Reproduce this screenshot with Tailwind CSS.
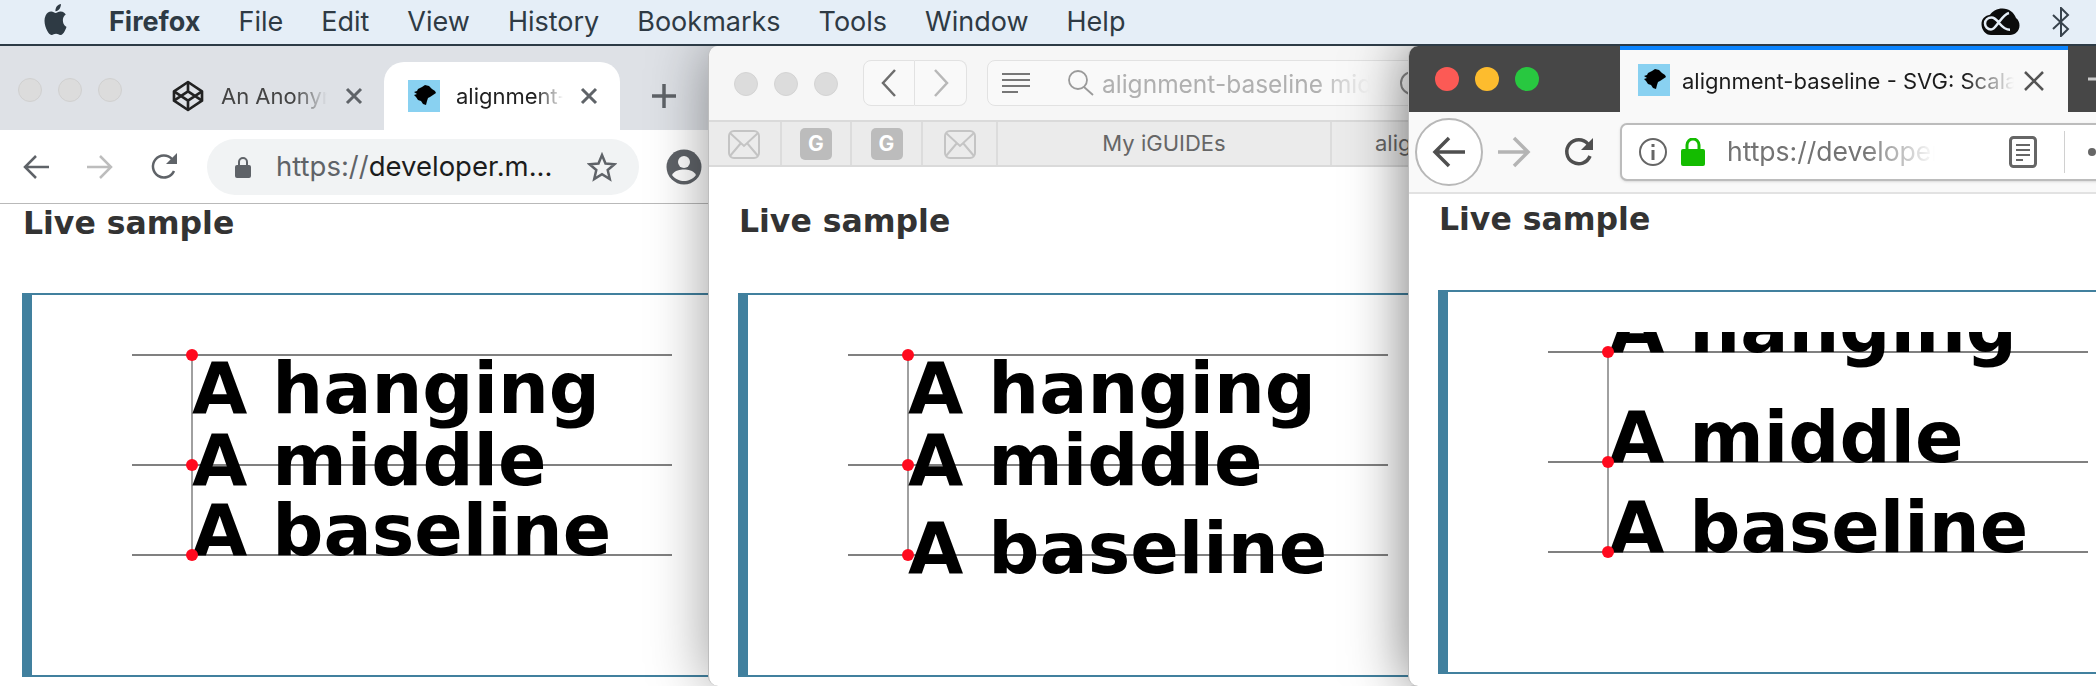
<!DOCTYPE html>
<html><head><meta charset="utf-8"><script src="https://cdn.jsdelivr.net/npm/@tailwindcss/browser@4"></script></head>
<body class="bg-white">
<div class="relative w-[2096px] h-[686px] overflow-hidden [font-family:'Inter',sans-serif]">

<!-- menu bar -->
<header class="absolute left-0 top-0 z-40 w-full h-[46px] border-b-2 border-[#2d3b46] bg-[#e5eef7] flex items-center text-[#2e3a44] text-[27px] pl-[42px]">
  <svg class="w-[27px] h-[31px] mr-[40px] -mt-[6px] shrink-0" viewBox="0 0 24 24" preserveAspectRatio="none" fill="#2e3a44"><path d="M12.152 6.896c-.948 0-2.415-1.078-3.96-1.04-2.04.027-3.91 1.183-4.961 3.014-2.117 3.675-.546 9.103 1.519 12.09 1.013 1.454 2.208 3.09 3.792 3.039 1.52-.065 2.09-.987 3.935-.987 1.831 0 2.35.987 3.96.948 1.637-.026 2.676-1.48 3.676-2.948 1.156-1.688 1.636-3.325 1.662-3.415-.039-.013-3.182-1.221-3.22-4.857-.026-3.04 2.48-4.494 2.597-4.559-1.429-2.09-3.623-2.324-4.39-2.376-2-.156-3.675 1.09-4.61 1.09zM15.53 3.83c.843-1.012 1.4-2.427 1.245-3.83-1.207.052-2.662.805-3.532 1.818-.78.896-1.454 2.338-1.273 3.714 1.338.104 2.715-.688 3.559-1.701"/></svg>
  <nav class="flex gap-[38px]">
    <span class="font-bold">Firefox</span><span>File</span><span>Edit</span><span>View</span><span>History</span><span>Bookmarks</span><span>Tools</span><span>Window</span><span>Help</span>
  </nav>
  <div class="ml-auto flex items-center gap-[32px] pr-[26px]">
    <svg class="w-[39px] h-[28px]" viewBox="0 0 39 28" fill="none"><path d="M10 27C4.500 27 0.500 22 0.500 16C0.500 11 4 7.500 9 6.800C11.500 3 16 0.500 21.500 0.500C28 0.500 33 4.500 35 10C37.500 12 38.500 14.500 38.500 17.500C38.500 23 34 27 29 27Z" fill="#0c0c0c"/><path d="M28 5C24 6 21 10 18 14C15 18 13 21.500 10 21.500C6.500 21.500 4 18.500 4 15.500C4 12 7 9.500 10.500 9.500C14 9.500 16 12.500 18.500 15.500C21 18.500 24 21.800 29 21.800" stroke="#e5eef7" stroke-width="2.500"/></svg>
    <svg class="w-[18px] h-[30px]" viewBox="0 0 18 30" fill="none" stroke="#37424c" stroke-width="2"><path d="M1 8L16 22L9 29V1L16 8L1 22"/></svg>
  </div>
</header>

<!-- window 1 : Chrome -->
<section class="absolute left-0 top-[46px] w-[720px] h-[640px] z-10 rounded-b-[10px] overflow-hidden bg-white flex flex-col">
  <div class="h-[84px] bg-[#dee1e6] flex items-end pl-[18px] shrink-0">
    <div class="flex gap-[16px] h-[43px] items-center self-start mt-[22px]">
      <span class="w-[24px] h-[24px] rounded-full bg-[#dcdcdc] border border-[#d0d0d0]"></span><span class="w-[24px] h-[24px] rounded-full bg-[#dcdcdc] border border-[#d0d0d0]"></span><span class="w-[24px] h-[24px] rounded-full bg-[#dcdcdc] border border-[#d0d0d0]"></span>
    </div>
    <div class="flex items-center h-[68px] w-[262px] pl-[50px] gap-[17px] shrink-0">
      <svg class="w-[32px] h-[32px] shrink-0" viewBox="0 0 24 24" fill="none" stroke="#222" stroke-width="2" stroke-linejoin="round"><path d="M12 1.500L22.500 8.500V15.500L12 22.500L1.500 15.500V8.500Z"/><path d="M12 22.500V15.500M22.500 8.500L12 15.500L1.500 8.500M1.500 15.500L12 8.500L22.500 15.500M12 1.500V8.500"/></svg>
      <span class="w-[106px] text-[22px] text-[#444] whitespace-nowrap overflow-hidden [mask-image:linear-gradient(to_right,black_70%,transparent)]">An Anonymous</span>
      <svg class="w-[18px] h-[18px] shrink-0 ml-[1px]" viewBox="0 0 18 18" stroke="#5f6368" stroke-width="3"><path d="M2 2L16 16M16 2L2 16"/></svg>
    </div>
    <div class="flex items-center h-[68px] w-[236px] bg-white rounded-t-[20px] pl-[24px] gap-[16px] shrink-0">
      <svg class="w-[32px] h-[32px] shrink-0" viewBox="0 0 32 32"><rect width="32" height="32" fill="#89d1f1"/><path d="M10 9L14 7L17 5L21 6L24 9L27 11L28 13L25 15L22 17L20 18L19 21L18 25L15 24L13 21L10 20L8 17L6 15L9 14L6 12L9 11Z" fill="#000"/></svg>
      <span class="w-[107px] text-[22px] text-[#222] whitespace-nowrap overflow-hidden [mask-image:linear-gradient(to_right,black_75%,transparent)]">alignment-baseline</span>
      <svg class="w-[18px] h-[18px] shrink-0 ml-[1px]" viewBox="0 0 18 18" stroke="#5f6368" stroke-width="3"><path d="M2 2L16 16M16 2L2 16"/></svg>
    </div>
    <svg class="w-[24px] h-[24px] ml-[32px] mb-[22px] shrink-0" viewBox="0 0 24 24" stroke="#5f6368" stroke-width="3.500"><path d="M12 0V24M0 12H24"/></svg>
  </div>
  <div class="h-[74px] border-b border-[#b9b9b9] flex items-center shrink-0">
    <svg class="ml-[22px] w-[28px] h-[28px] shrink-0" viewBox="0 0 28 28" fill="none" stroke="#5f6368" stroke-width="2.500"><path d="M27 14H3M14 3L3 14L14 25"/></svg>
    <svg class="ml-[36px] w-[28px] h-[28px] shrink-0" viewBox="0 0 28 28" fill="none" stroke="#bdbdbd" stroke-width="2.500"><path d="M1 14H25M14 3L25 14L14 25"/></svg>
    <svg class="ml-[35px] w-[30px] h-[30px] shrink-0" viewBox="0 0 30 30" fill="none" stroke="#5f6368" stroke-width="2.500"><path d="M25 19A11 11 0 1 1 23 7L26 10"/><path d="M28 1V12H17" fill="#5f6368" stroke="none"/></svg>
    <div class="ml-[28px] w-[432px] h-[56px] bg-[#f1f3f4] rounded-full flex items-center pl-[28px] pr-[22px] shrink-0">
      <svg class="w-[16px] h-[22px] shrink-0" viewBox="0 0 16 22"><path d="M4 9V6A4 4 0 0 1 12 6V9" fill="none" stroke="#5f6368" stroke-width="2"/><rect y="9" width="16" height="13" rx="2" fill="#5f6368"/></svg>
      <span class="ml-[25px] text-[27.500px] whitespace-nowrap w-[290px]"><span class="text-[#5f6368]">https://</span><span class="text-[#1c1c1c]">developer.m...</span></span>
      <svg class="ml-auto w-[30px] h-[30px] shrink-0" viewBox="0 0 30 30" fill="none" stroke="#5f6368" stroke-width="2.500"><path d="M15 3L18.500 11.500L27.500 12.200L20.700 18L22.800 27L15 22.200L7.200 27L9.300 18L2.500 12.200L11.500 11.500Z"/></svg>
    </div>
    <svg class="ml-[27px] w-[36px] h-[36px] shrink-0" viewBox="0 0 36 36"><circle cx="18" cy="18" r="17.500" fill="#5f6368"/><circle cx="18" cy="13" r="6" fill="#fff"/><path d="M6 26C9 21 14 20.500 18 20.500C22 20.500 27 21 30 26C27 30 22 32 18 32C14 32 9 30 6 26Z" fill="#fff"/></svg>
  </div>
  <h2 class="ml-[23px] mt-[1px] h-[36px] text-[31.500px] leading-[36px] font-bold text-[#333] [font-family:'DejaVu_Sans',sans-serif]">Live sample</h2>
  <div class="ml-[22px] mt-[52px] w-[760px] h-[384px] border-l-[10px] border-y-2 border-[#41809e] bg-white pl-[100px] pt-[40px] shrink-0">
    <svg width="540" height="300" viewBox="0 0 540 300" class="block"><path d="M0 20H540M0 130H540M0 220H540" stroke="#808080" stroke-width="2"/><path d="M60 20V220" stroke="#808080" stroke-width="1.500"/><text font-family="DejaVu Sans" font-weight="700" font-size="71.500" fill="#000"><tspan x="60" y="78">A hanging</tspan><tspan x="60" y="150">A middle</tspan><tspan x="60" y="220">A baseline</tspan></text><g fill="#ff0a1e"><circle cx="60" cy="20" r="6"/><circle cx="60" cy="130" r="6"/><circle cx="60" cy="220" r="6"/></g></svg>
  </div>
</section>

<!-- window 2 : Safari -->
<section class="absolute left-[708px] top-[46px] w-[712px] h-[640px] z-20 rounded-[10px] overflow-hidden bg-white border-l border-[#bdbdbd] shadow-[0_0_60px_rgba(0,0,0,0.4)] flex flex-col">
  <div class="h-[74px] bg-[#f6f6f6] flex items-center pl-[25px] shrink-0">
    <div class="flex gap-[16px] mt-[1px]">
      <span class="w-[24px] h-[24px] rounded-full bg-[#dcdcdc] border border-[#d4d4d4]"></span><span class="w-[24px] h-[24px] rounded-full bg-[#dcdcdc] border border-[#d4d4d4]"></span><span class="w-[24px] h-[24px] rounded-full bg-[#dcdcdc] border border-[#d4d4d4]"></span>
    </div>
    <div class="ml-[25px] flex shrink-0">
      <div class="w-[52px] h-[46px] bg-[#f9f9f9] border border-[#e2e2e2] rounded-l-[8px] flex items-center justify-center"><svg class="w-[16px] h-[30px]" viewBox="0 0 16 30" fill="none" stroke="#6e6e6e" stroke-width="2.500"><path d="M14 2L2 15L14 28"/></svg></div>
      <div class="w-[52px] h-[46px] bg-[#f9f9f9] border border-[#e2e2e2] border-l-0 rounded-r-[8px] flex items-center justify-center"><svg class="w-[16px] h-[30px]" viewBox="0 0 16 30" fill="none" stroke="#b8b8b8" stroke-width="2.500"><path d="M2 2L14 15L2 28"/></svg></div>
    </div>
    <div class="ml-[20px] w-[440px] h-[46px] bg-[#f9f9f9] border border-[#e2e2e2] rounded-[8px] flex items-center pl-[14px] shrink-0">
      <svg class="w-[28px] h-[20px] shrink-0" viewBox="0 0 28 20" stroke="#777" stroke-width="1.800"><path d="M0 1H28M0 7H28M0 13H28M0 19H16"/></svg>
      <svg class="ml-[38px] w-[26px] h-[26px] shrink-0" viewBox="0 0 26 26" fill="none" stroke="#9a9a9a" stroke-width="1.800"><circle cx="10" cy="10" r="9"/><path d="M16 17L25 25"/></svg>
      <span class="ml-[8px] mt-[2px] w-[268px] text-[24.500px] text-[#b0b0b0] whitespace-nowrap overflow-hidden [mask-image:linear-gradient(to_right,black_80%,transparent)]">alignment-baseline middle</span>
      <svg class="ml-[30px] w-[24px] h-[24px] shrink-0" viewBox="0 0 24 24" fill="none" stroke="#8a8a8a" stroke-width="2"><circle cx="12" cy="12" r="11"/></svg>
    </div>
  </div>
  <div class="h-[47px] bg-[#ebebeb] border-y-2 border-[#dadada] flex items-center text-[22px] text-[#666] shrink-0">
    <div class="w-[73px] h-full border-r-2 border-[#dcdcdc] flex items-center justify-center pr-[2px] shrink-0"><svg class="w-[32px] h-[32px]" viewBox="0 0 32 32" fill="none" stroke="#c4c4c4" stroke-width="2"><rect x="1" y="3" width="30" height="27" rx="5"/><path d="M2 5L16 18L30 5M2 28L13 15M30 28L19 15"/></svg></div>
    <div class="w-[70px] h-full border-r-2 border-[#dcdcdc] flex items-center justify-center shrink-0"><div class="w-[32px] h-[32px] rounded-[5px] bg-[#bcbcbc] text-white font-bold text-[21px] flex items-center justify-center">G</div></div>
    <div class="w-[71px] h-full border-r-2 border-[#dcdcdc] flex items-center justify-center shrink-0"><div class="w-[32px] h-[32px] rounded-[5px] bg-[#bcbcbc] text-white font-bold text-[21px] flex items-center justify-center">G</div></div>
    <div class="w-[75px] h-full border-r-2 border-[#dcdcdc] flex items-center justify-center shrink-0"><svg class="w-[32px] h-[32px]" viewBox="0 0 32 32" fill="none" stroke="#c4c4c4" stroke-width="2"><rect x="1" y="3" width="30" height="27" rx="5"/><path d="M2 5L16 18L30 5M2 28L13 15M30 28L19 15"/></svg></div>
    <div class="w-[334px] h-full border-r-2 border-[#dcdcdc] flex items-center justify-center shrink-0">My iGUIDEs</div>
    <div class="pl-[43px] whitespace-nowrap">alignment</div>
  </div>
  <h2 class="ml-[30px] mt-[36px] h-[36px] text-[31.500px] leading-[36px] font-bold text-[#333] [font-family:'DejaVu_Sans',sans-serif]">Live sample</h2>
  <div class="ml-[29px] mt-[54px] w-[760px] h-[384px] border-l-[10px] border-y-2 border-[#41809e] bg-white pl-[100px] pt-[40px] shrink-0">
    <svg width="540" height="300" viewBox="0 0 540 300" class="block"><path d="M0 20H540M0 130H540M0 220H540" stroke="#808080" stroke-width="2"/><path d="M60 20V220" stroke="#808080" stroke-width="1.500"/><text font-family="DejaVu Sans" font-weight="700" font-size="71.500" fill="#000"><tspan x="60" y="78">A hanging</tspan><tspan x="60" y="150">A middle</tspan><tspan x="60" y="238">A baseline</tspan></text><g fill="#ff0a1e"><circle cx="60" cy="20" r="6"/><circle cx="60" cy="130" r="6"/><circle cx="60" cy="220" r="6"/></g></svg>
  </div>
</section>

<!-- window 3 : Firefox -->
<section class="absolute left-[1408px] top-[46px] w-[700px] h-[640px] z-30 rounded-[10px] overflow-hidden bg-white border-l border-[#bdbdbd] shadow-[0_0_60px_rgba(0,0,0,0.55)] flex flex-col">
  <div class="h-[66px] bg-[#474747] flex items-center shrink-0">
    <div class="flex gap-[16px] pl-[26px] w-[211px] shrink-0">
      <span class="w-[24px] h-[24px] rounded-full bg-[#fc5a55]"></span><span class="w-[24px] h-[24px] rounded-full bg-[#fdbc2e]"></span><span class="w-[24px] h-[24px] rounded-full bg-[#28c840]"></span>
    </div>
    <div class="h-full w-[448px] bg-[#f9f9f9] border-t-4 border-[#0a84ff] flex items-center pl-[18px] shrink-0">
      <svg class="w-[32px] h-[32px] shrink-0 mb-[2px]" viewBox="0 0 32 32"><rect width="32" height="32" fill="#89d1f1"/><path d="M10 9L14 7L17 5L21 6L24 9L27 11L28 13L25 15L22 17L20 18L19 21L18 25L15 24L13 21L10 20L8 17L6 15L9 14L6 12L9 11Z" fill="#000"/></svg>
      <span class="ml-[12px] w-[332px] text-[22px] text-[#1c1c1c] whitespace-nowrap overflow-hidden [mask-image:linear-gradient(to_right,black_85%,transparent)]">alignment-baseline - SVG: Scalable</span>
      <svg class="ml-[10px] w-[20px] h-[20px] shrink-0" viewBox="0 0 20 20" stroke="#555" stroke-width="2.500"><path d="M1 1L19 19M19 1L1 19"/></svg>
    </div>
    <svg class="ml-[20px] w-[14px] h-[24px] shrink-0" viewBox="0 0 14 24" stroke="#c9c9c9" stroke-width="3"><path d="M0 12H14"/></svg>
  </div>
  <div class="h-[82px] bg-[#f9f9f9] border-b-2 border-[#e2e2e2] flex items-center pl-[6px] shrink-0">
    <div class="w-[68px] h-[68px] rounded-full bg-white border-2 border-[#b8b8b8] flex items-center justify-center shrink-0"><svg class="w-[34px] h-[32px]" viewBox="0 0 34 32" fill="none" stroke="#4f4f4f" stroke-width="3.500"><path d="M33 16H3M17 2L3 16L17 30"/></svg></div>
    <svg class="ml-[14px] w-[34px] h-[32px] shrink-0" viewBox="0 0 34 32" fill="none" stroke="#b4b4b4" stroke-width="3.500"><path d="M1 16H31M17 2L31 16L17 30"/></svg>
    <svg class="ml-[32px] w-[32px] h-[32px] shrink-0" viewBox="0 0 32 32" fill="none" stroke="#4f4f4f" stroke-width="3.500"><path d="M27 20A12 12 0 1 1 25 8L28 11"/><path d="M30 2V14H18" fill="#4f4f4f" stroke="none"/></svg>
    <div class="ml-[25px] h-[58px] w-[490px] bg-white border-2 border-[#bcbcbc] rounded-[7px] shadow-sm flex items-center pl-[17px] shrink-0">
      <svg class="w-[28px] h-[28px] shrink-0" viewBox="0 0 28 28" fill="none" stroke="#666" stroke-width="2"><circle cx="14" cy="14" r="13"/><path d="M14 12V22" stroke-width="3"/><path d="M14 6V9" stroke-width="3"/></svg>
      <svg class="ml-[14px] w-[24px] h-[28px] shrink-0" viewBox="0 0 24 28"><path d="M6 12V7A6 6 0 0 1 18 7V12" fill="none" stroke="#14bc00" stroke-width="3"/><rect y="11" width="24" height="17" rx="2" fill="#14bc00"/></svg>
      <span class="ml-[22px] w-[208px] text-[26.500px] text-[#737373] whitespace-nowrap overflow-hidden [mask-image:linear-gradient(to_right,black_65%,transparent)]">https://developer.moz</span>
      <svg class="ml-[74px] w-[28px] h-[32px] shrink-0" viewBox="0 0 28 32" fill="none" stroke="#666"><rect x="1.500" y="1.500" width="25" height="29" rx="3" stroke-width="3"/><path d="M7 9H21M7 14H21M7 19H21M7 24H14" stroke-width="2"/></svg>
      <span class="ml-[27px] w-[1px] h-[42px] bg-[#d0d0d0] shrink-0"></span>
      <span class="ml-[23px] w-[8px] h-[8px] rounded-full bg-[#666] shrink-0"></span>
    </div>
  </div>
  <h2 class="ml-[30px] mt-[7px] h-[36px] text-[31.500px] leading-[36px] font-bold text-[#333] [font-family:'DejaVu_Sans',sans-serif]">Live sample</h2>
  <div class="ml-[29px] mt-[53px] w-[760px] h-[384px] border-l-[10px] border-y-2 border-[#41809e] bg-white pl-[100px] pt-[40px] shrink-0">
    <svg width="540" height="300" viewBox="0 0 540 300" class="block"><path d="M0 20H540M0 130H540M0 220H540" stroke="#808080" stroke-width="2"/><path d="M60 20V220" stroke="#808080" stroke-width="1.500"/><text font-family="DejaVu Sans" font-weight="700" font-size="71.500" fill="#000"><tspan x="61" y="20">A hanging</tspan><tspan x="61" y="130">A middle</tspan><tspan x="61" y="220">A baseline</tspan></text><g fill="#ff0a1e"><circle cx="60" cy="20" r="6"/><circle cx="60" cy="130" r="6"/><circle cx="60" cy="220" r="6"/></g></svg>
  </div>
</section>
</div>
</body></html>
